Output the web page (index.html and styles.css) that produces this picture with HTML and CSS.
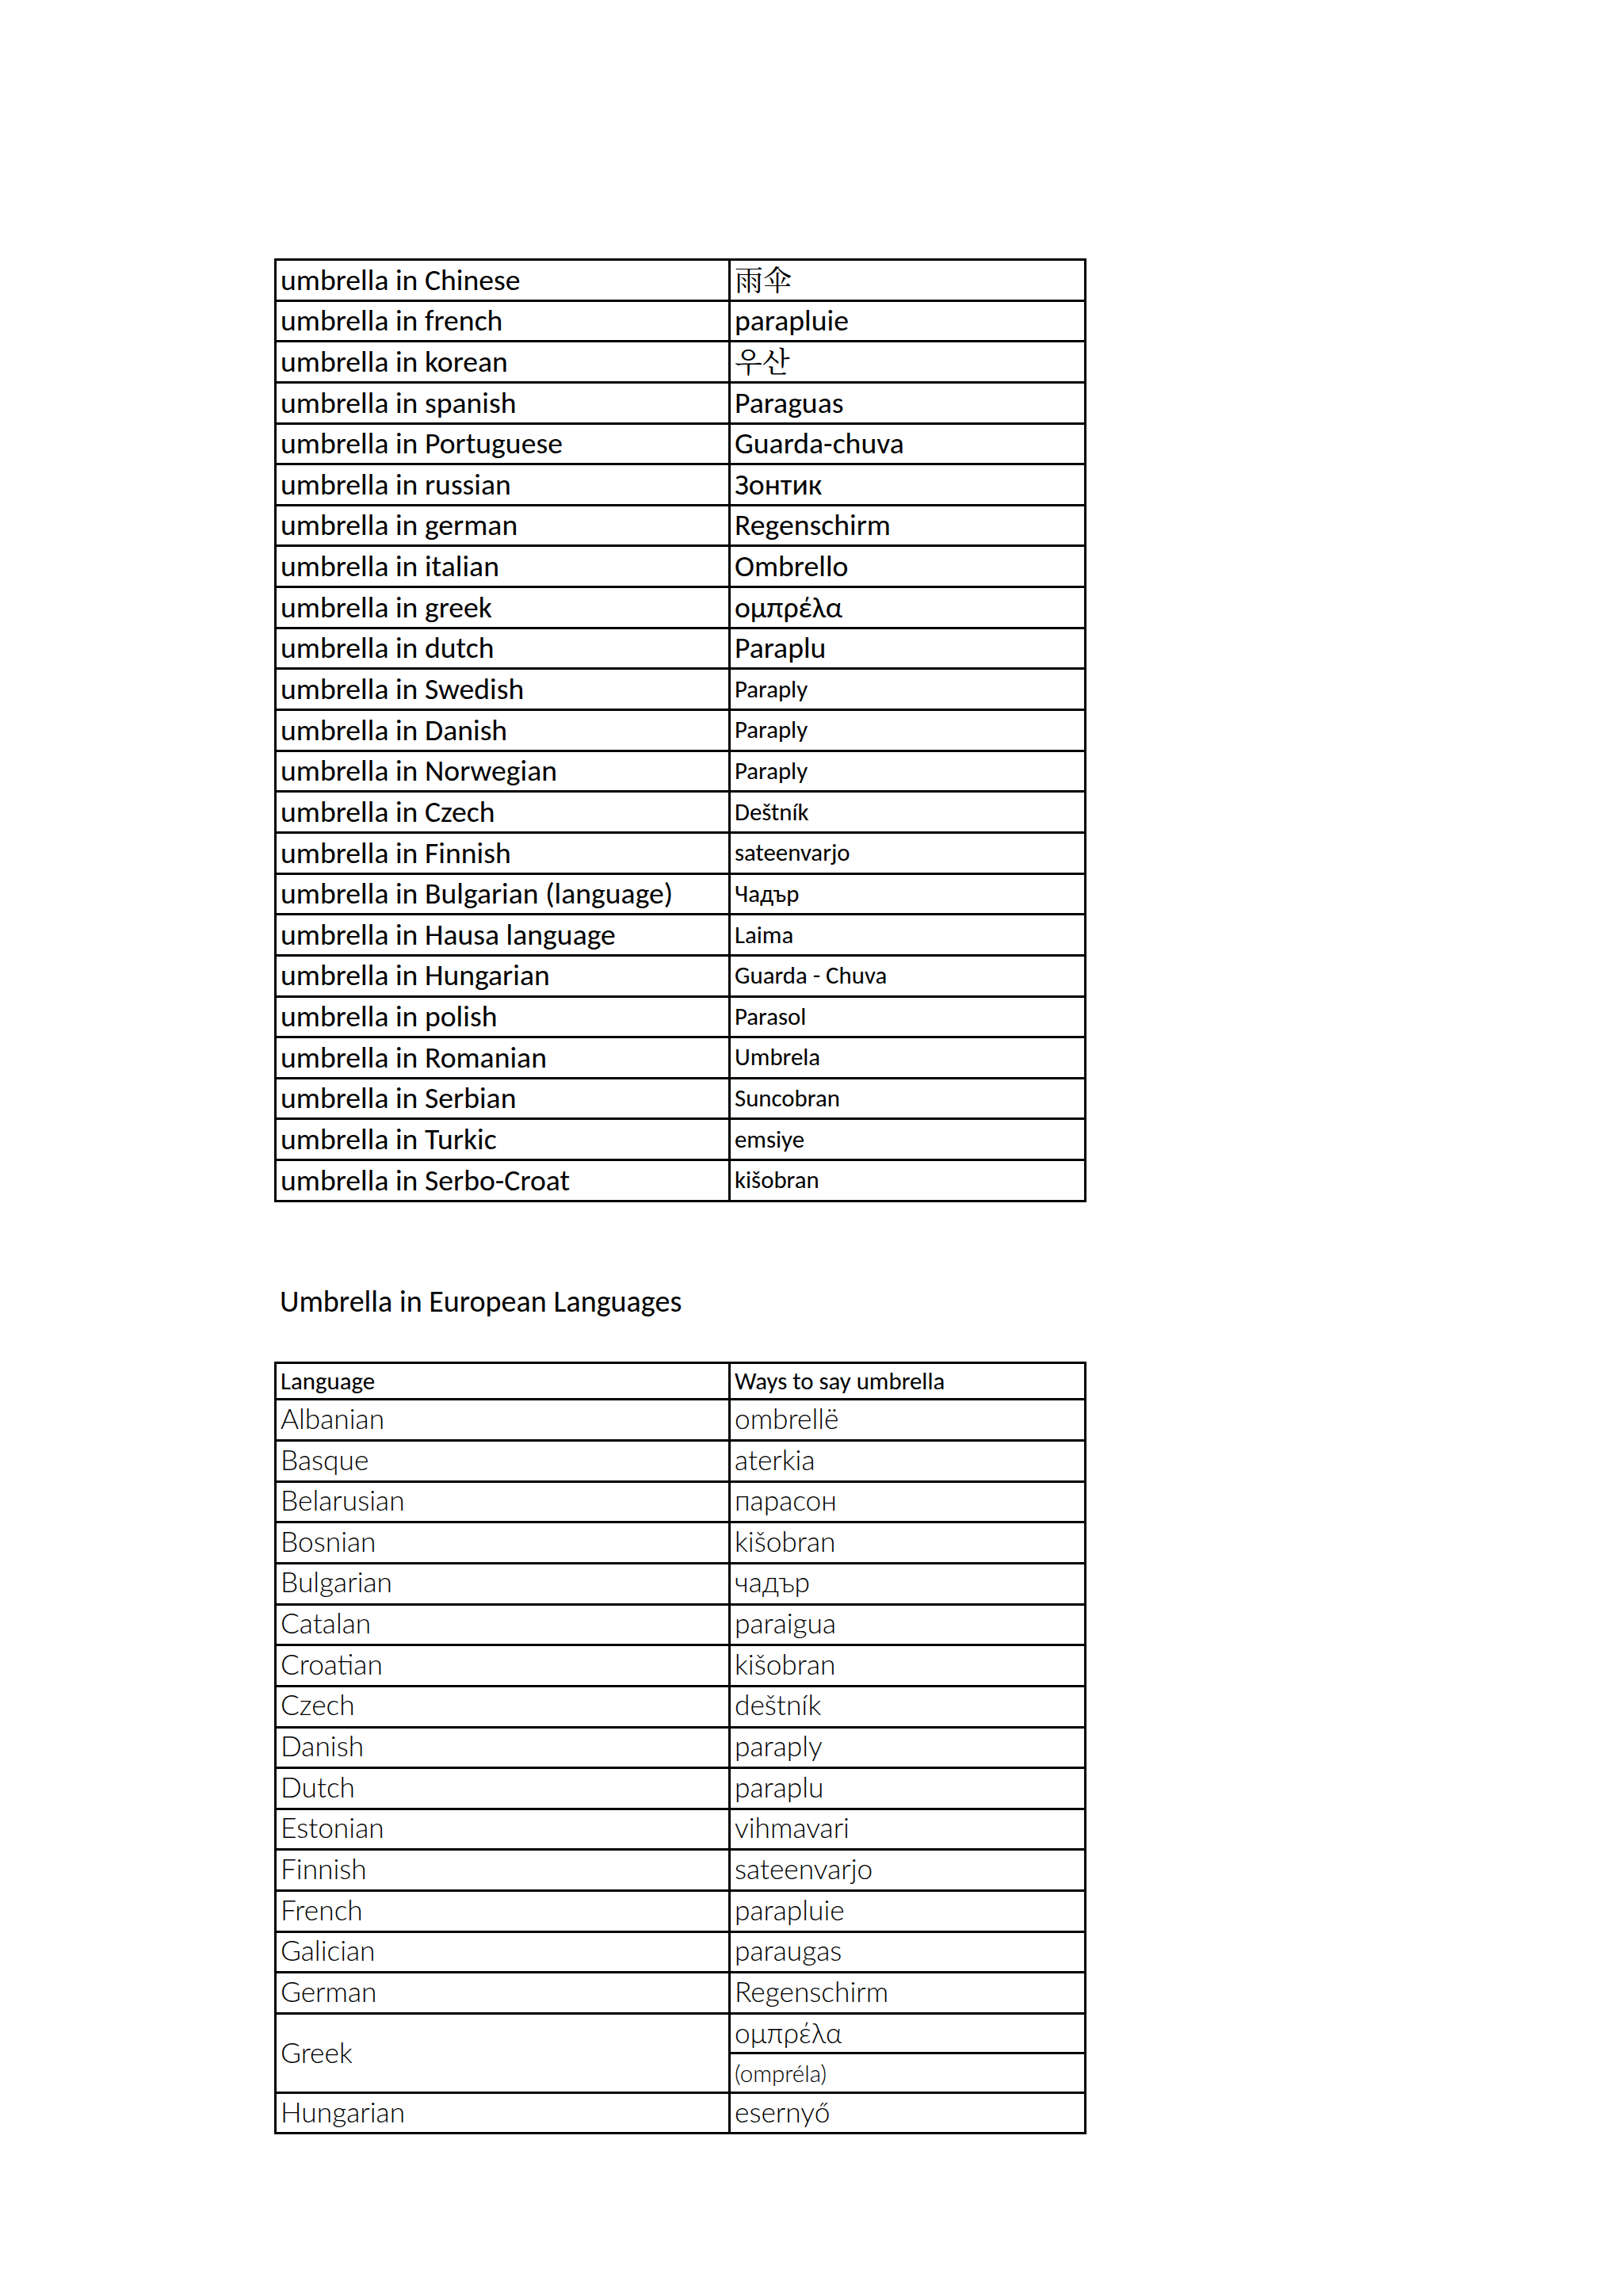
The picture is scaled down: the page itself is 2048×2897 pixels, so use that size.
FILE: index.html
```html
<!DOCTYPE html>
<html lang="en">
<head>
<meta charset="utf-8">
<title>Umbrella in different languages</title>
<link rel="stylesheet" href="styles.css">
</head>
<body>
<main class="page">
  <div class="grid grid--words" role="table" aria-label="Umbrella translations">
    <div class="cell">umbrella in Chinese</div><div class="cell cell--cjk" lang="zh">雨伞</div>
    <div class="cell">umbrella in french</div><div class="cell">parapluie</div>
    <div class="cell">umbrella in korean</div><div class="cell cell--cjk cell--ko" lang="ko">우산</div>
    <div class="cell">umbrella in spanish</div><div class="cell">Paraguas</div>
    <div class="cell">umbrella in Portuguese</div><div class="cell">Guarda-chuva</div>
    <div class="cell">umbrella in russian</div><div class="cell">Зонтик</div>
    <div class="cell">umbrella in german</div><div class="cell">Regenschirm</div>
    <div class="cell">umbrella in italian</div><div class="cell">Ombrello</div>
    <div class="cell">umbrella in greek</div><div class="cell">ομπρέλα</div>
    <div class="cell">umbrella in dutch</div><div class="cell">Paraplu</div>
    <div class="cell">umbrella in Swedish</div><div class="cell cell--small">Paraply</div>
    <div class="cell">umbrella in Danish</div><div class="cell cell--small">Paraply</div>
    <div class="cell">umbrella in Norwegian</div><div class="cell cell--small">Paraply</div>
    <div class="cell">umbrella in Czech</div><div class="cell cell--small">Deštník</div>
    <div class="cell">umbrella in Finnish</div><div class="cell cell--small">sateenvarjo</div>
    <div class="cell">umbrella in Bulgarian (language)</div><div class="cell cell--small">Чадър</div>
    <div class="cell">umbrella in Hausa language</div><div class="cell cell--small">Laima</div>
    <div class="cell">umbrella in Hungarian</div><div class="cell cell--small">Guarda - Chuva</div>
    <div class="cell">umbrella in polish</div><div class="cell cell--small">Parasol</div>
    <div class="cell">umbrella in Romanian</div><div class="cell cell--small">Umbrela</div>
    <div class="cell">umbrella in Serbian</div><div class="cell cell--small">Suncobran</div>
    <div class="cell">umbrella in Turkic</div><div class="cell cell--small">emsiye</div>
    <div class="cell">umbrella in Serbo-Croat</div><div class="cell cell--small">kišobran</div>
  </div>

  <h2 class="section-title">Umbrella in European Languages</h2>

  <div class="grid grid--euro" role="table" aria-label="Umbrella in European languages">
    <div class="cell cell--head">Language</div><div class="cell cell--head">Ways to say umbrella</div>
    <div class="cell cell--light">Albanian</div><div class="cell cell--light">ombrellë</div>
    <div class="cell cell--light">Basque</div><div class="cell cell--light">aterkia</div>
    <div class="cell cell--light">Belarusian</div><div class="cell cell--light">парасон</div>
    <div class="cell cell--light">Bosnian</div><div class="cell cell--light">kišobran</div>
    <div class="cell cell--light">Bulgarian</div><div class="cell cell--light">чадър</div>
    <div class="cell cell--light">Catalan</div><div class="cell cell--light">paraigua</div>
    <div class="cell cell--light">Croatian</div><div class="cell cell--light">kišobran</div>
    <div class="cell cell--light">Czech</div><div class="cell cell--light">deštník</div>
    <div class="cell cell--light">Danish</div><div class="cell cell--light">paraply</div>
    <div class="cell cell--light">Dutch</div><div class="cell cell--light">paraplu</div>
    <div class="cell cell--light">Estonian</div><div class="cell cell--light">vihmavari</div>
    <div class="cell cell--light">Finnish</div><div class="cell cell--light">sateenvarjo</div>
    <div class="cell cell--light">French</div><div class="cell cell--light">parapluie</div>
    <div class="cell cell--light">Galician</div><div class="cell cell--light">paraugas</div>
    <div class="cell cell--light">German</div><div class="cell cell--light">Regenschirm</div>
    <div class="cell cell--light cell--span">Greek</div><div class="cell cell--light">ομπρέλα</div>
    <div class="cell cell--note">(ompréla)</div>
    <div class="cell cell--light">Hungarian</div><div class="cell cell--light">esernyő</div>
  </div>
</main>
</body>
</html>
```

FILE: styles.css
```css
* { box-sizing: border-box; }

html, body {
  margin: 0;
  background: #fff;
}

body {
  font-family: Carlito, Lato, "Liberation Sans", sans-serif;
  color: #000;
}

.page {
  padding: 326px 0 0 346px;
}

.grid {
  display: grid;
  grid-template-columns: 573px 449px;
  width: 1025px;
  border-top: 3px solid #000;
  border-left: 3px solid #000;
}

.grid--words {
  grid-auto-rows: 51.65px;
}

.grid--euro {
  grid-template-rows: 46px repeat(15, 51.65px) 50px 50px 51px;
}

.cell {
  border-right: 3px solid #000;
  border-bottom: 3px solid #000;
  padding: 5.6px 0 0 5px;
  font-size: 37.7px;
  line-height: 1;
  white-space: nowrap;
}

.cell--cjk {
  font-family: "Noto Serif CJK SC", "Noto Sans CJK SC", serif;
  font-weight: 400;
  font-size: 36px;
  line-height: 1.15;
  padding-top: 2px;
}

.cell--ko {
  font-family: "Noto Serif CJK KR", "Noto Sans CJK KR", serif;
}

.cell--small {
  font-size: 30.84px;
  padding-top: 9.3px;
}

.cell--head {
  font-size: 30.84px;
  padding-top: 7px;
}

.cell--light {
  font-family: Lato, Carlito, sans-serif;
  font-weight: 300;
  font-size: 35.3px;
  line-height: 1.2;
  padding-top: 1.5px;
}

.cell--note {
  font-family: Lato, Carlito, sans-serif;
  font-weight: 300;
  font-size: 29.5px;
  line-height: 1.2;
  padding-top: 5.5px;
}

.cell--span {
  grid-row: span 2;
  display: flex;
  align-items: center;
  padding-top: 0;
}

.section-title {
  margin: 106.2px 0 57.4px;
  padding-left: 7px;
  font-size: 38.1px;
  line-height: 1;
  font-weight: 400;
}
```
